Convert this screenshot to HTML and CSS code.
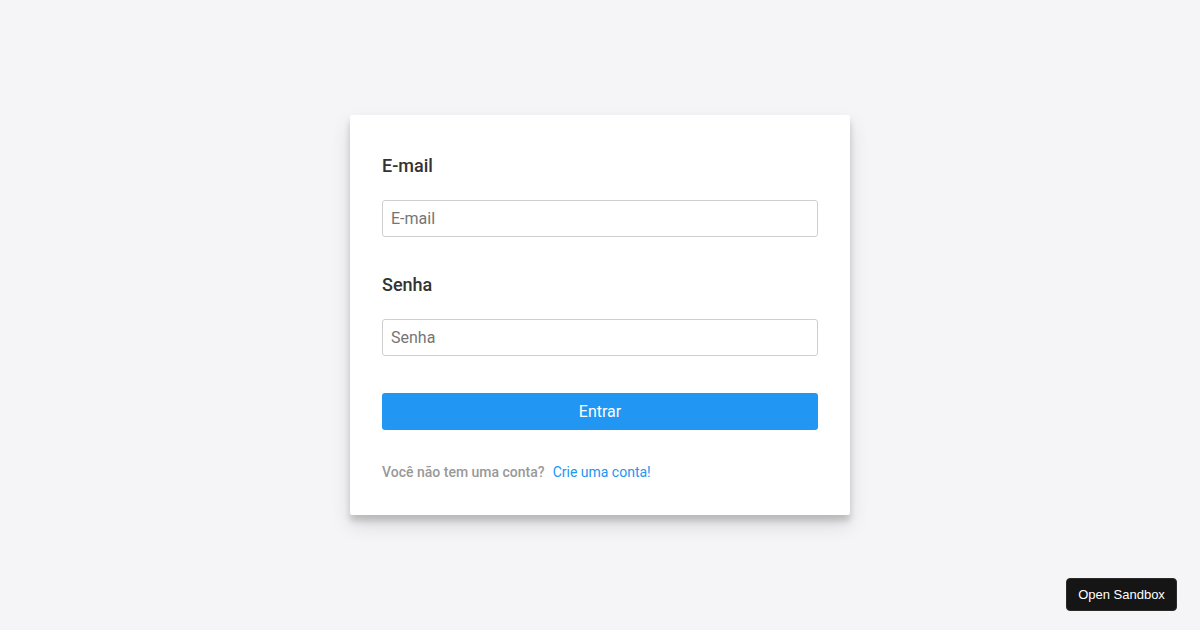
FILE: index.html
```html
<!DOCTYPE html>
<html lang="pt-BR">
<head>
<meta charset="utf-8">
<title>Login</title>
<link rel="stylesheet" href="styles.css">
</head>
<body>
<main class="page">
  <form class="card">
    <label class="label label-first" for="email">E-mail</label>
    <input class="field" id="email" type="email" placeholder="E-mail">
    <label class="label" for="senha">Senha</label>
    <input class="field" id="senha" type="password" placeholder="Senha">
    <button class="submit" type="button">Entrar</button>
    <p class="footer"><span class="muted">Você não tem uma conta?</span><a class="link" href="#">Crie uma conta!</a></p>
  </form>
</main>
<button class="sandbox" type="button">Open Sandbox</button>
</body>
</html>
```
FILE: styles.css
```css
* { box-sizing: border-box; }
html, body { margin: 0; height: 100%; }
body {
  background: #f5f5f7;
  font-family: Roboto, "Liberation Sans", sans-serif;
  color: #333;
}
.page {
  height: 100%;
  display: flex;
  align-items: center;
  justify-content: center;
}
.card {
  width: 500px;
  height: 400px;
  background: #fff;
  border-radius: 2px;
  padding: 32px;
  display: flex;
  flex-direction: column;
  box-shadow: 0 10px 20px rgba(0,0,0,0.12), 0 6px 6px rgba(0,0,0,0.16);
}
.label {
  display: block;
  font-size: 18px;
  line-height: 21px;
  font-weight: 500;
  color: #333;
  margin: 37px 0 24px;
}
.label-first { margin-top: 8px; }
.field {
  display: block;
  width: 100%;
  height: 37px;
  border: 1px solid #cfcfcf;
  border-radius: 3px;
  padding: 0 8px;
  font-family: Roboto, "Liberation Sans", sans-serif;
  font-size: 16px;
  color: #333;
  background: #fff;
  outline: none;
}
.field::placeholder { color: #757575; }
.submit {
  margin-top: 37px;
  height: 37px;
  width: 100%;
  border: 0;
  border-radius: 3px;
  background: #2196f3;
  color: #fff;
  font-family: Roboto, "Liberation Sans", sans-serif;
  font-size: 16px;
  cursor: pointer;
}
.footer {
  margin: 34px 0 0;
  font-size: 14px;
  line-height: 16px;
}
.muted { color: #999; font-weight: 500; }
.link { color: #2196f3; text-decoration: none; margin-left: 8px; }
.sandbox {
  position: fixed;
  right: 23px;
  bottom: 19px;
  width: 111px;
  height: 33px;
  background: #151515;
  color: #fff;
  border: 1px solid #2a2a2a;
  border-radius: 4px;
  font-family: "Liberation Sans", Arial, sans-serif;
  font-size: 13px;
  padding: 0;
}
```
